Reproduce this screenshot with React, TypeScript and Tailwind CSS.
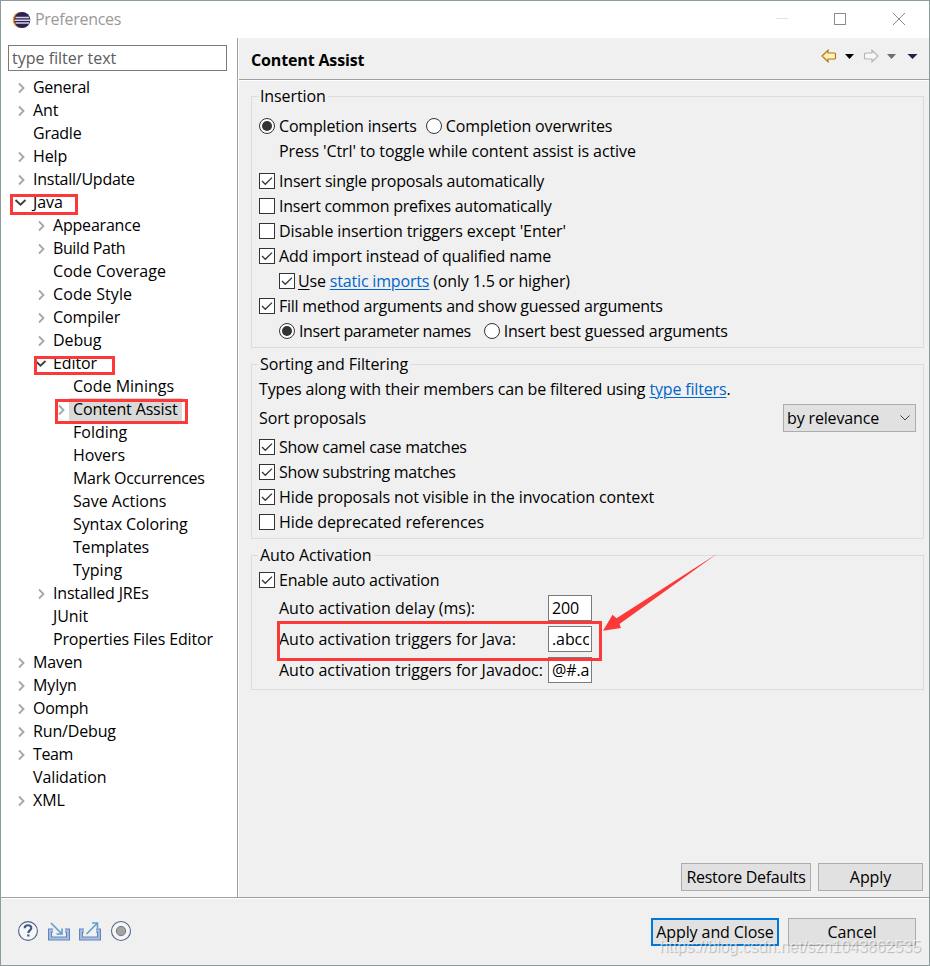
import type { ReactNode } from 'react';
import clsx from 'clsx';

interface TreeItem {
  text: string;
  level?: number;
  state?: 'open' | 'closed';
  selected?: boolean;
  tracking?: string;
}

const treeItems: TreeItem[] = [
  { text: 'General', state: 'closed', tracking: 'tracking-[-0.3px]' },
  { text: 'Ant', state: 'closed' },
  { text: 'Gradle', tracking: 'tracking-[-0.25px]' },
  { text: 'Help', state: 'closed' },
  { text: 'Install/Update', state: 'closed', tracking: 'tracking-[-0.25px]' },
  { text: 'Java', state: 'open' },
  { text: 'Appearance', level: 1, state: 'closed', tracking: 'tracking-[-0.2px]' },
  { text: 'Build Path', level: 1, state: 'closed', tracking: 'tracking-[-0.4px]' },
  { text: 'Code Coverage', level: 1, tracking: 'tracking-[0.05px]' },
  { text: 'Code Style', level: 1, state: 'closed', tracking: 'tracking-[0.1px]' },
  { text: 'Compiler', level: 1, state: 'closed' },
  { text: 'Debug', level: 1, state: 'closed' },
  { text: 'Editor', level: 1, state: 'open' },
  { text: 'Code Minings', level: 2, tracking: 'tracking-normal' },
  { text: 'Content Assist', level: 2, state: 'closed', selected: true, tracking: 'tracking-[-0.15px]' },
  { text: 'Folding', level: 2, tracking: 'tracking-normal' },
  { text: 'Hovers', level: 2 },
  { text: 'Mark Occurrences', level: 2, tracking: 'tracking-[-0.28px]' },
  { text: 'Save Actions', level: 2, tracking: 'tracking-normal' },
  { text: 'Syntax Coloring', level: 2 },
  { text: 'Templates', level: 2, tracking: 'tracking-[-0.2px]' },
  { text: 'Typing', level: 2, tracking: 'tracking-normal' },
  { text: 'Installed JREs', level: 1, state: 'closed', tracking: 'tracking-[-0.18px]' },
  { text: 'JUnit', level: 1 },
  { text: 'Properties Files Editor', level: 1, tracking: 'tracking-[-0.15px]' },
  { text: 'Maven', state: 'closed' },
  { text: 'Mylyn', state: 'closed' },
  { text: 'Oomph', state: 'closed', tracking: 'tracking-[-0.25px]' },
  { text: 'Run/Debug', state: 'closed', tracking: 'tracking-[-0.15px]' },
  { text: 'Team', state: 'closed', tracking: 'tracking-[-0.4px]' },
  { text: 'Validation' },
  { text: 'XML', state: 'closed' },
];

const indents = ['pl-[13px]', 'pl-[33px]', 'pl-[53px]'];

function TreeRow({ text, level = 0, state, selected, tracking }: TreeItem) {
  return (
    <div className={clsx('flex h-[23px] items-center', indents[level])}>
      <svg className="w-[15px] shrink-0" height="15" viewBox="0 0 15 15" fill="none">
        {state === 'closed' && <path d="M5 3.5 9.5 8 5 12.5" stroke="#a6a6a6" strokeWidth="1.8" />}
        {state === 'open' && <path d="M1.5 5 6.5 9.8 11.5 5" stroke="#404040" strokeWidth="1.9" />}
      </svg>
      <span className={clsx('h-[23px] px-1 leading-[22px]', selected && 'bg-[#d9d9d9]', tracking)}>{text}</span>
    </div>
  );
}

interface OptionProps {
  checked?: boolean;
  tracking?: string;
  children: ReactNode;
}

function Checkbox({ checked, tracking, children }: OptionProps) {
  return (
    <label className="flex h-[25px] items-start">
      <span className="mr-1 mt-1 flex size-4 shrink-0 items-center justify-center border border-[#333] bg-white">
        {checked && (
          <svg width="14" height="14" viewBox="0 0 14 14" fill="none" stroke="#333" strokeWidth="1.3">
            <path d="M2 7 5.3 10.3 12 3.6" />
          </svg>
        )}
      </span>
      <span className={clsx('leading-6', tracking)}>{children}</span>
    </label>
  );
}

function Radio({ checked, tracking, children }: OptionProps) {
  return (
    <label className="flex h-[25px] items-start">
      <span className="mr-1 mt-1 flex size-4 shrink-0 items-center justify-center rounded-full border border-[#333] bg-white">
        {checked && <span className="size-[10px] rounded-full bg-[#333]" />}
      </span>
      <span className={clsx('leading-6', tracking)}>{children}</span>
    </label>
  );
}

function Group({ title, className, children }: { title: string; className?: string; children: ReactNode }) {
  return (
    <fieldset className={clsx('w-[673px] border border-[#dcdcdc] pl-[7px]', className)}>
      <legend className="-ml-px h-[25px] px-[2px] leading-[25px]">{title}</legend>
      {children}
    </fieldset>
  );
}

function Field({ label, value }: { label: string; value: string }) {
  return (
    <div className="flex h-[26px] items-center pl-5">
      <span className="w-[269px] whitespace-nowrap tracking-normal">{label}</span>
      <span className="h-[26px] w-11 border border-[#7a7a7a] bg-white pl-[3px] pr-[2px] leading-[24px]">
        <span className="block overflow-hidden whitespace-nowrap">{value}</span>
      </span>
    </div>
  );
}

function Button({ primary, className, children }: { primary?: boolean; className: string; children: ReactNode }) {
  return (
    <button
      className={clsx(
        'flex h-7 items-center justify-center whitespace-nowrap bg-[#e1e1e1]',
        primary ? 'border-2 border-[#0078d7]' : 'border border-[#adadad]',
        className,
      )}
    >
      {children}
    </button>
  );
}

function Link({ children }: { children: ReactNode }) {
  return <a className="text-[#0066cc] underline decoration-1 underline-offset-2">{children}</a>;
}

function EclipseLogo() {
  return (
    <svg width="19" height="18" viewBox="0 0 19 18">
      <circle cx="8.8" cy="9" r="8.1" fill="#f7941e" />
      <circle cx="10.2" cy="9" r="8.1" fill="#2c2255" />
      <path d="M3.5 6.5h13.500M2.500 9.200h15.500M3.500 12h13.500" stroke="#d5d2e2" strokeWidth="1.5" />
    </svg>
  );
}

function TitleBar() {
  return (
    <header className="flex h-[37px] items-center bg-white pl-[11px]">
      <EclipseLogo />
      <span className="ml-1 grow tracking-[-0.27px] text-[#999]">Preferences</span>
      <svg width="154" height="37" viewBox="0 0 154 37" fill="none" shapeRendering="crispEdges">
        <path d="M1 17.5h12" stroke="#e2e2e2" />
        <path d="M59.5 12.5h11v11h-11z" stroke="#8c8c8c" />
        <path d="m118 12 12 12M130 12l-12 12" stroke="#8c8c8c" shapeRendering="auto" />
      </svg>
    </header>
  );
}

function HistoryButtons() {
  return (
    <svg width="98" height="14" viewBox="0 0 98 14">
      <path d="M1 7 7 1.3V4h6.5q1 0 1 1v4q0 1-1 1H7v2.7z" fill="#fff3b8" stroke="#b87514" strokeWidth="1.2" />
      <path d="M24 5h9l-4.5 5z" fill="#000" />
      <path d="M57 7 51 1.3V4h-6.5q-1 0-1 1v4q0 1 1 1H51v2.7z" fill="#f7f7f7" stroke="#b4b4b4" strokeWidth="1.2" />
      <path d="M66 5h9l-4.5 5z" fill="#6d6d6d" />
      <path d="M86.5 5h10l-5 5z" fill="#2e1a47" />
    </svg>
  );
}

function FooterIcons() {
  return (
    <svg width="114" height="22" viewBox="0 0 114 22" fill="none">
      <circle cx="10" cy="11" r="9.4" fill="#f4f6fa" stroke="#4f6185" strokeWidth="1.1" />
      <path d="M6.700 8.300C6.700 4.300 13.300 4.300 13.300 8c0 2.300-3 2.500-3 5" stroke="#46587f" strokeWidth="2.2" />
      <path d="M9.200 14.500h2.300v2H9.200z" fill="#46587f" />

      <path d="M35 10.500h-3v8h18v-8h-3" stroke="#6484bd" strokeWidth="4" />
      <path d="M35 10.500h-3v8h18v-8h-3" stroke="#a9c0e4" strokeWidth="1.8" />
      <path d="m33 3 10.500 10.500M44 8.500V14h-5.500" stroke="#5e9fca" strokeWidth="1.6" />

      <path d="M66 10.500h-3v8h18v-8h-3" stroke="#6484bd" strokeWidth="4" />
      <path d="M66 10.500h-3v8h18v-8h-3" stroke="#a9c0e4" strokeWidth="1.8" />
      <path d="M68.500 14 79 3.500M74 3h5.500v5.500" stroke="#5e9fca" strokeWidth="1.6" />

      <circle cx="103" cy="11" r="9.5" fill="#f5f6f8" stroke="#53678c" strokeWidth="1.1" />
      <circle cx="103" cy="11" r="4.7" fill="#a3a3a3" stroke="#777" />
    </svg>
  );
}

/* red marks drawn over the dialog */
function Annotations() {
  return (
    <svg className="pointer-events-none absolute -left-px -top-px" width="930" height="966" viewBox="0 0 930 966" fill="none">
      <g stroke="#fc3938" strokeWidth="3">
        <path d="M11.500 195.500h65v18h-65z" />
        <path d="M35.500 357.500h78v16h-78z" />
        <path d="M56.500 400.500h130v22h-130z" />
        <path d="M278.500 622.500h322v37h-322z" />
      </g>
      <path d="m603 630.800 9.500-16 4 3.500L717.500 553.500 619.500 624l1.500 4z" fill="#fc3938" />
    </svg>
  );
}

export default function App() {
  return (
    <div className="relative flex h-[966px] w-[930px] flex-col overflow-hidden border border-[#8a9c9c] bg-[#f0f0f0] font-['Open_Sans',sans-serif] text-[16px] leading-[25px] tracking-[-0.1px] text-black">
      <TitleBar />

      <div className="flex h-[859px]">
        <aside className="w-[237px] border-r border-[#a0a0a0] bg-white pt-[7px]">
          <div className="mb-[5px] ml-[7px] h-[26px] w-[219px] border border-[#7a7a7a] pl-[3px] leading-[25px] tracking-normal text-[#5c5c5c]">
            type filter text
          </div>
          {treeItems.map((item) => (
            <TreeRow key={item.text} {...item} />
          ))}
        </aside>

        <main className="flex grow flex-col border-l border-white">
          <div className="flex h-[43px] items-center justify-between border-b border-b-white pl-3 pr-[10px] shadow-[inset_0_-1px_0_#a0a0a0]">
            <h1 className="mt-[2px] text-[16px] font-bold tracking-[-0.15px]">Content Assist</h1>
            <div className="-mt-[6px]">
              <HistoryButtons />
            </div>
          </div>

          <div className="flex grow flex-col gap-1 pl-3 pt-[3px]">
            <Group title="Insertion" className="h-[264px] pt-[5px]">
              <div className="flex gap-[9px]">
                <Radio checked tracking="tracking-[-0.18px]">Completion inserts</Radio>
                <Radio tracking="tracking-[-0.12px]">Completion overwrites</Radio>
              </div>
              <p className="mb-[5px] pl-5 tracking-[-0.08px]">Press 'Ctrl' to toggle while content assist is active</p>
              <Checkbox checked tracking="tracking-[-0.2px]">Insert single proposals automatically</Checkbox>
              <Checkbox tracking="tracking-[-0.26px]">Insert common prefixes automatically</Checkbox>
              <Checkbox>Disable insertion triggers except 'Enter'</Checkbox>
              <Checkbox checked tracking="tracking-[-0.17px]">Add import instead of qualified name</Checkbox>
              <div className="pl-5">
                <Checkbox checked tracking="tracking-[-0.17px]">
                  <span className="-ml-px underline decoration-1 underline-offset-2">U</span>se <Link>static imports</Link> (only 1.5 or higher)
                </Checkbox>
              </div>
              <Checkbox checked tracking="tracking-[-0.24px]">Fill method arguments and show guessed arguments</Checkbox>
              <div className="flex gap-[13px] pl-5">
                <Radio checked tracking="tracking-[-0.41px]">Insert parameter names</Radio>
                <Radio tracking="tracking-[-0.21px]">Insert best guessed arguments</Radio>
              </div>
            </Group>

            <Group title="Sorting and Filtering" className="h-[187px]">
              <p className="mb-[2px] tracking-[-0.16px]">
                Types along with their members can be filtered using <Link>type filters</Link>.
              </p>
              <div className="mb-[3px] flex h-7 items-center justify-between pr-[7px]">
                <span>Sort proposals</span>
                <div className="flex h-7 w-[133px] items-center justify-between border border-[#adadad] bg-[#e1e1e1] pl-[3px] pr-1">
                  <span className="tracking-[-0.15px]">by relevance</span>
                  <svg width="12" height="12" viewBox="0 0 12 12" fill="none" stroke="#444">
                    <path d="M1.500 3.500 6 8l4.500-4.500" />
                  </svg>
                </div>
              </div>
              <Checkbox checked tracking="tracking-[-0.28px]">Show camel case matches</Checkbox>
              <Checkbox checked tracking="tracking-[-0.25px]">Show substring matches</Checkbox>
              <Checkbox checked>Hide proposals not visible in the invocation context</Checkbox>
              <Checkbox>Hide deprecated references</Checkbox>
            </Group>

            <Group title="Auto Activation" className="h-[147px]">
              <Checkbox checked tracking="tracking-[-0.22px]">Enable auto activation</Checkbox>
              <div className="mt-[2px] flex flex-col gap-[5px]">
                <Field label="Auto activation delay (ms):" value="200" />
                <Field label="Auto activation triggers for Java:" value=".abcc" />
                <Field label="Auto activation triggers for Javadoc:" value="@#.a" />
              </div>
            </Group>
          </div>

          <div className="mb-[6px] flex justify-end gap-[7px] pr-[6px]">
            <Button className="w-[130px] tracking-[-0.28px]">Restore Defaults</Button>
            <Button className="w-[105px]">Apply</Button>
          </div>
        </main>
      </div>

      <footer className="relative flex grow items-start justify-between border-t border-[#a0a0a0] pl-[17px] pr-[13px] shadow-[inset_0_1px_0_#fff]">
        <div className="mt-[22px]">
          <FooterIcons />
        </div>
        <div className="mt-5 flex gap-[9px]">
          <Button primary className="w-32">
            Apply and Close
          </Button>
          <Button className="w-32">Cancel</Button>
        </div>
        <span className="absolute right-[8px] top-[38px] whitespace-nowrap font-['Liberation_Sans',sans-serif] text-[16px] leading-[22px] tracking-normal text-white/60 [text-shadow:1px_1px_1px_rgba(0,0,0,0.25)]">
          https://blog.csdn.net/szn1043862535
        </span>
      </footer>

      <Annotations />
    </div>
  );
}
